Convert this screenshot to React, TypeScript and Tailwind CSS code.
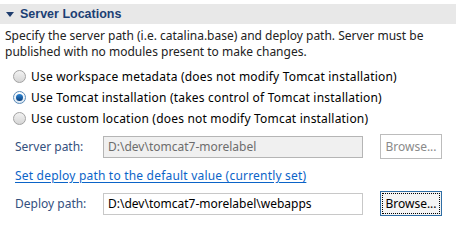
import { useState } from 'react'

const Radio = ({ checked, label, onClick }: { checked: boolean; label: string; onClick: () => void }) => (
  <label className="flex items-center h-[21px] pl-[13px] cursor-default" onClick={onClick}>
    <span
      className={
        'w-[13px] h-[13px] rounded-full border flex items-center justify-center ' +
        (checked
          ? 'border-[#5b8bb8] bg-gradient-to-b from-white to-[#dce8f3]'
          : 'border-[#a2a2a2] bg-gradient-to-b from-[#f2f2f2] to-[#d6d6d6]')
      }
    >
      {checked && <span className="w-[7px] h-[7px] rounded-full bg-gradient-to-b from-[#2c86d6] to-[#0b3f7c]" />}
    </span>
    <span className="ml-[5px] text-black tracking-[0.2px]">{label}</span>
  </label>
)

export default function App() {
  const [mode, setMode] = useState(1)
  const [deployPath, setDeployPath] = useState('D:\\dev\\tomcat7-morelabel\\webapps')

  return (
    <div className="w-[468px] h-[228px] bg-white text-[12px] leading-none overflow-hidden font-[family-name:'Noto_Sans','Open_Sans',sans-serif]">
      <div className="pt-[4px] pr-[12px]">
        {/* section header */}
        <div className="h-[20px] bg-[#e8e8e8] flex items-center">
          <svg width="8" height="5" viewBox="0 0 8 5" className="ml-[6px]">
            <path d="M0 0H8L4 5Z" fill="#1f3d6e" />
          </svg>
          <span className="ml-[6px] font-bold text-[12.5px] font-[family-name:'Liberation_Sans',sans-serif] text-[#1c3f74]">
            Server Locations
          </span>
        </div>
      </div>

      <div className="px-[5px] pt-[4px] text-[#222] leading-[16px]">
        Specify the server path (i.e. catalina.base) and deploy path. Server must be
        <br />
        published with no modules present to make changes.
      </div>

      <div className="mt-[6px] flex flex-col">
        <Radio checked={mode === 0} onClick={() => setMode(0)} label="Use workspace metadata (does not modify Tomcat installation)" />
        <Radio checked={mode === 1} onClick={() => setMode(1)} label="Use Tomcat installation (takes control of Tomcat installation)" />
        <Radio checked={mode === 2} onClick={() => setMode(2)} label="Use custom location (does not modify Tomcat installation)" />
      </div>

      <div className="mt-[5px] flex items-center h-[25px]">
        <span className="w-[103px] pl-[15px] text-[#34507e]">Server path:</span>
        <div className="w-[260px] h-[22px] border border-[#b5b5b5] bg-[#f0f0f0] flex items-center px-[4px] text-[#6d6d6d]">
          D:\dev\tomcat7-morelabel
        </div>
        <button className="ml-[17px] w-[62px] h-[25px] border border-[#bcbcbc] bg-white text-[#8a8a8a]">Browse...</button>
      </div>

      <div className="mt-[7px] pl-[15px] h-[20px] flex items-center">
        <a className="text-[#0b64c8] underline underline-offset-2 tracking-[0.2px] cursor-pointer">
          Set deploy path to the default value (currently set)
        </a>
      </div>

      <div className="mt-[5px] flex items-center h-[25px]">
        <span className="w-[103px] pl-[15px] text-[#34507e]">Deploy path:</span>
        <input
          value={deployPath}
          onChange={(e: React.ChangeEvent<HTMLInputElement>) => setDeployPath(e.target.value)}
          className="w-[260px] h-[22px] border border-[#c8c8c8] bg-white px-[4px] text-black outline-none"
        />
        <button className="ml-[17px] w-[62px] h-[25px] border border-[#2f6ea5] bg-[#f4f4f4] text-black p-[1px]">
          <span className="flex items-center justify-center w-full h-full border border-dotted border-black">Browse...</span>
        </button>
      </div>
    </div>
  )
}
